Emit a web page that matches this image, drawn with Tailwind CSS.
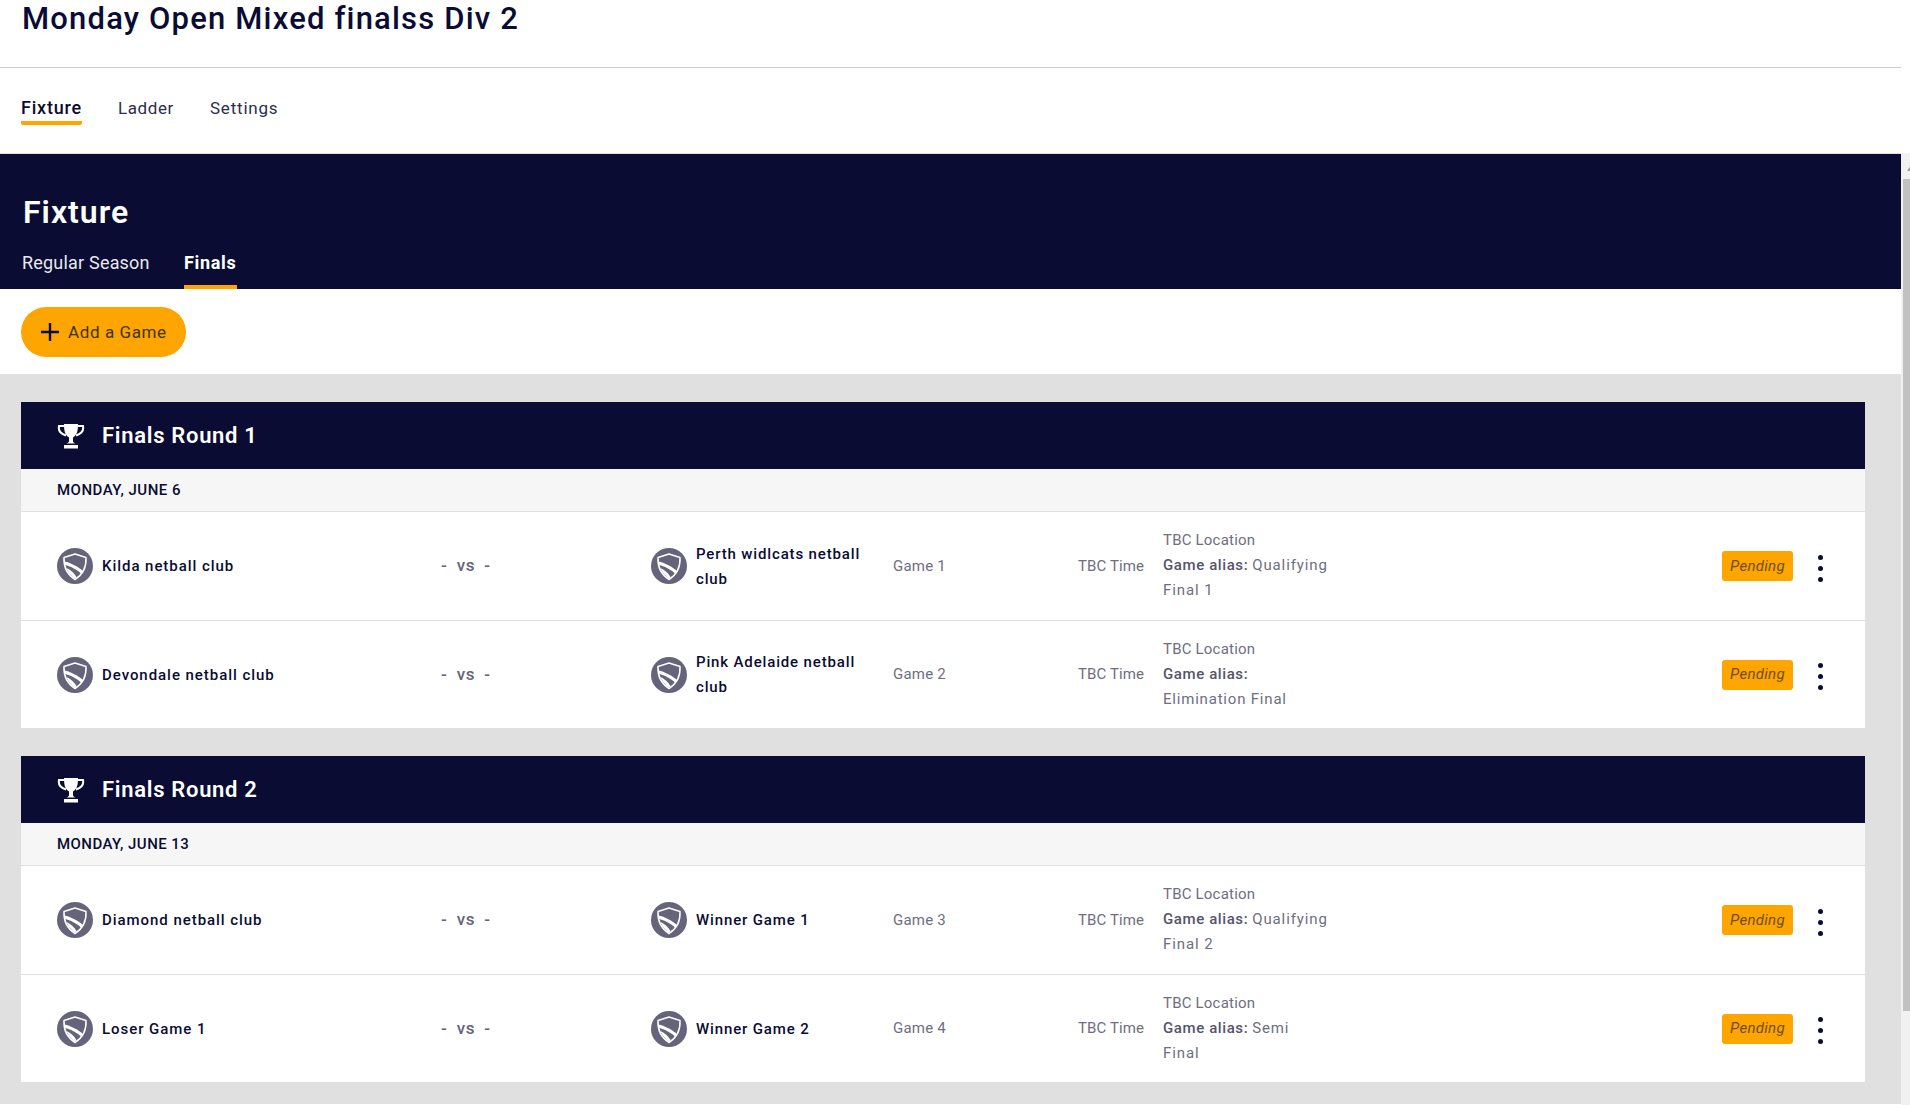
<!DOCTYPE html>
<html lang="en">
<head>
  <meta charset="UTF-8" />
  <title>Monday Open Mixed finalss Div 2</title>
  <script src="https://cdn.jsdelivr.net/npm/@tailwindcss/browser@4"></script>
</head>
<body class="bg-white h-[1105px] overflow-hidden font-['Roboto',sans-serif] text-[#0a0c33]">

  <svg class="hidden">
    <symbol id="shield" viewBox="0 0 36 36">
      <circle cx="18" cy="18" r="18" fill="#66647a" />
      <path d="M18 6 L29 9.5 C29.5 18 26.5 26 18 31.5 C9.5 26 6.5 18 7 9.5 Z" fill="none" stroke="#fff" stroke-width="1.5" stroke-linejoin="round" />
      <path d="M7.5 13.5 C13 14.5 22 19 26.5 23.5 L24.5 26 C20 21.5 13 18 8 17 Z" fill="#fff" />
      <path d="M9.5 20 C13 21.5 17 25 19.5 29 L18 30.5 C15 28.5 11 24.5 9.5 20 Z" fill="#fff" />
    </symbol>
    <symbol id="trophy" viewBox="0 0 28 26">
      <path d="M7 1 H21 C21 8 20 12 16 14.5 V18 C16 19.5 17.5 20.5 19 20.5 H9 C10.5 20.5 12 19.5 12 18 V14.5 C8 12 7 8 7 1 Z" fill="#fff" />
      <path d="M7 3 H2 C1 8 4 11 9 12.5 M21 3 H26 C27 8 24 11 19 12.5" fill="none" stroke="#fff" stroke-width="2" />
      <rect x="7" y="22" width="14" height="3.5" fill="#fff" />
    </symbol>
  </svg>

  <div class="w-[1901px]">
    <!-- Page title -->
    <header class="h-[68px] border-b border-[#cccccc] pl-[22px] pt-[1px]">
      <h1 class="text-[31px] leading-[36px] font-medium tracking-[1.18px]">Monday Open Mixed finalss Div 2</h1>
    </header>

    <!-- Top tabs -->
    <nav class="h-[86px] pl-[21px] pt-[30px] flex gap-[36px] text-[17px] border-b border-[#e0e0e0] text-[#2c2d4d]">
      <a class="w-[61px] h-[27px] border-b-4 border-[#ffa500] rounded-b-[2px] font-medium text-[#0a0c33] text-[18px] tracking-[0.8px] leading-[20px]">Fixture</a>
      <a class="leading-[20px] tracking-[0.6px]">Ladder</a>
      <a class="leading-[20px] tracking-[0.8px]">Settings</a>
    </nav>

    <!-- Section banner -->
    <section class="h-[135px] bg-[#0a0c33] text-white pl-[23px] flex flex-col">
      <h2 class="text-[32px] leading-[36px] font-semibold mt-[40px] tracking-[1px]">Fixture</h2>
      <div class="flex gap-[36px] mt-[23px] text-[18px] leading-[20px]">
        <a class="w-[126px] -ml-[1px] tracking-[0.2px] text-[#e9e9ee] whitespace-nowrap">Regular Season</a>
        <a class="h-[36px] w-[53px] border-b-4 border-[#ffa500] font-bold tracking-[0.65px]">Finals</a>
      </div>
    </section>

    <!-- Add game -->
    <div class="h-[85px] pl-[21px] pt-[18px]">
      <button class="w-[165px] h-[50px] rounded-full bg-[#ffa500] flex items-center pl-[20px] gap-[9px] text-[17px] text-[#3d3423] tracking-[0.6px]">
        <svg class="w-[18px] h-[18px]" viewBox="0 0 18 18"><path d="M9 0 V18 M0 9 H18" stroke="#0a0c33" stroke-width="2.4" /></svg>
        <span class="mt-[1px]">Add a Game</span>
      </button>
    </div>

    <!-- Rounds -->
    <main class="bg-[#e0e0e0] h-[730px] pt-[28px] px-[21px] w-full">

      <div class="w-[1844px] bg-white mb-[28px]">
        <div class="h-[67px] bg-[#0a0c33] text-white flex items-center pl-[36px] gap-[17px]">
          <svg class="w-[28px] h-[26px]"><use href="#trophy" /></svg>
          <h3 class="text-[22px] font-semibold tracking-[0.7px]">Finals Round 1</h3>
        </div>
        <div class="h-[43px] pt-[1px] bg-[#f6f6f6] border-b border-[#e0e0e0] flex items-center pl-[36px] text-[15px] font-medium tracking-[0.5px]">MONDAY, JUNE 6</div>

        <div class="h-[109px] border-b border-[#e0e0e0] flex items-center pl-[36px] text-[15px]">
          <div class="w-[385px] flex items-center gap-[9px] font-medium tracking-[0.95px]">
            <svg class="w-[36px] h-[36px] shrink-0"><use href="#shield" /></svg>
            <span class="mt-[1px]">Kilda netball club</span>
          </div>
          <div class="w-[209px] -ml-[1px] mr-[1px] text-[#66647a] font-medium tracking-[0.5px] text-[17px]">-&nbsp; vs &nbsp;-</div>
          <div class="w-[242px] flex items-center gap-[9px] font-medium tracking-[0.85px] leading-[25px]">
            <svg class="w-[36px] h-[36px] shrink-0"><use href="#shield" /></svg>
            <span class="w-[195px] mt-[1px]">Perth widlcats netball club</span>
          </div>
          <div class="w-[185px] text-[#6f6e7f] tracking-[0.2px]">Game 1</div>
          <div class="w-[85px] text-[#6f6e7f] tracking-[0.1px]">TBC Time</div>
          <div class="w-[175px] -mt-[1px] text-[#6f6e7f] leading-[25px] tracking-[0.2px]">TBC Location<br /><b class="font-medium text-[#55546a] tracking-[0.6px]">Game alias:</b> <span class="tracking-[0.9px]">Qualifying<br />Final 1</span></div>
          <div class="ml-auto flex items-center">
            <span class="w-[71px] h-[30px] rounded-[3px] bg-[#ffa500] text-[#6f4e14] italic text-[15px] flex items-center justify-center tracking-[0.3px]">Pending</span>
            <svg class="w-[5px] h-[27px] mt-[4px] ml-[25px] mr-[42px]" viewBox="0 0 5 27" fill="#0a0c33"><circle cx="2.5" cy="2.5" r="2.5" /><circle cx="2.5" cy="13.5" r="2.5" /><circle cx="2.5" cy="24.5" r="2.5" /></svg>
          </div>
        </div>

        <div class="h-[107px] flex items-center pl-[36px] text-[15px]">
          <div class="w-[385px] flex items-center gap-[9px] font-medium tracking-[0.95px]">
            <svg class="w-[36px] h-[36px] shrink-0"><use href="#shield" /></svg>
            <span class="mt-[1px]">Devondale netball club</span>
          </div>
          <div class="w-[209px] -ml-[1px] mr-[1px] text-[#66647a] font-medium tracking-[0.5px] text-[17px]">-&nbsp; vs &nbsp;-</div>
          <div class="w-[242px] flex items-center gap-[9px] font-medium tracking-[0.85px] leading-[25px]">
            <svg class="w-[36px] h-[36px] shrink-0"><use href="#shield" /></svg>
            <span class="w-[195px] mt-[1px]">Pink Adelaide netball club</span>
          </div>
          <div class="w-[185px] text-[#6f6e7f] tracking-[0.2px]">Game 2</div>
          <div class="w-[85px] text-[#6f6e7f] tracking-[0.1px]">TBC Time</div>
          <div class="w-[175px] -mt-[1px] text-[#6f6e7f] leading-[25px] tracking-[0.2px]">TBC Location<br /><b class="font-medium text-[#55546a] tracking-[0.6px]">Game alias:</b><br /><span class="tracking-[0.8px]">Elimination Final</span></div>
          <div class="ml-auto flex items-center">
            <span class="w-[71px] h-[30px] rounded-[3px] bg-[#ffa500] text-[#6f4e14] italic text-[15px] flex items-center justify-center tracking-[0.3px]">Pending</span>
            <svg class="w-[5px] h-[27px] mt-[4px] ml-[25px] mr-[42px]" viewBox="0 0 5 27" fill="#0a0c33"><circle cx="2.5" cy="2.5" r="2.5" /><circle cx="2.5" cy="13.5" r="2.5" /><circle cx="2.5" cy="24.5" r="2.5" /></svg>
          </div>
        </div>
      </div>

      <div class="w-[1844px] bg-white">
        <div class="h-[67px] bg-[#0a0c33] text-white flex items-center pl-[36px] gap-[17px]">
          <svg class="w-[28px] h-[26px]"><use href="#trophy" /></svg>
          <h3 class="text-[22px] font-semibold tracking-[0.7px]">Finals Round 2</h3>
        </div>
        <div class="h-[43px] pt-[1px] bg-[#f6f6f6] border-b border-[#e0e0e0] flex items-center pl-[36px] text-[15px] font-medium tracking-[0.45px]">MONDAY, JUNE 13</div>

        <div class="h-[109px] border-b border-[#e0e0e0] flex items-center pl-[36px] text-[15px]">
          <div class="w-[385px] flex items-center gap-[9px] font-medium tracking-[0.95px]">
            <svg class="w-[36px] h-[36px] shrink-0"><use href="#shield" /></svg>
            <span class="mt-[1px]">Diamond netball club</span>
          </div>
          <div class="w-[209px] -ml-[1px] mr-[1px] text-[#66647a] font-medium tracking-[0.5px] text-[17px]">-&nbsp; vs &nbsp;-</div>
          <div class="w-[242px] flex items-center gap-[9px] font-medium tracking-[0.85px] leading-[25px]">
            <svg class="w-[36px] h-[36px] shrink-0"><use href="#shield" /></svg>
            <span class="w-[195px] mt-[1px]">Winner Game 1</span>
          </div>
          <div class="w-[185px] text-[#6f6e7f] tracking-[0.2px]">Game 3</div>
          <div class="w-[85px] text-[#6f6e7f] tracking-[0.1px]">TBC Time</div>
          <div class="w-[175px] -mt-[1px] text-[#6f6e7f] leading-[25px] tracking-[0.2px]">TBC Location<br /><b class="font-medium text-[#55546a] tracking-[0.6px]">Game alias:</b> <span class="tracking-[0.9px]">Qualifying<br />Final 2</span></div>
          <div class="ml-auto flex items-center">
            <span class="w-[71px] h-[30px] rounded-[3px] bg-[#ffa500] text-[#6f4e14] italic text-[15px] flex items-center justify-center tracking-[0.3px]">Pending</span>
            <svg class="w-[5px] h-[27px] mt-[4px] ml-[25px] mr-[42px]" viewBox="0 0 5 27" fill="#0a0c33"><circle cx="2.5" cy="2.5" r="2.5" /><circle cx="2.5" cy="13.5" r="2.5" /><circle cx="2.5" cy="24.5" r="2.5" /></svg>
          </div>
        </div>

        <div class="h-[107px] flex items-center pl-[36px] text-[15px]">
          <div class="w-[385px] flex items-center gap-[9px] font-medium tracking-[0.95px]">
            <svg class="w-[36px] h-[36px] shrink-0"><use href="#shield" /></svg>
            <span class="mt-[1px]">Loser Game 1</span>
          </div>
          <div class="w-[209px] -ml-[1px] mr-[1px] text-[#66647a] font-medium tracking-[0.5px] text-[17px]">-&nbsp; vs &nbsp;-</div>
          <div class="w-[242px] flex items-center gap-[9px] font-medium tracking-[0.85px] leading-[25px]">
            <svg class="w-[36px] h-[36px] shrink-0"><use href="#shield" /></svg>
            <span class="w-[195px] mt-[1px]">Winner Game 2</span>
          </div>
          <div class="w-[185px] text-[#6f6e7f] tracking-[0.2px]">Game 4</div>
          <div class="w-[85px] text-[#6f6e7f] tracking-[0.1px]">TBC Time</div>
          <div class="w-[175px] -mt-[1px] text-[#6f6e7f] leading-[25px] tracking-[0.2px]">TBC Location<br /><b class="font-medium text-[#55546a] tracking-[0.6px]">Game alias:</b> <span class="tracking-[0.9px]">Semi<br />Final</span></div>
          <div class="ml-auto flex items-center">
            <span class="w-[71px] h-[30px] rounded-[3px] bg-[#ffa500] text-[#6f4e14] italic text-[15px] flex items-center justify-center tracking-[0.3px]">Pending</span>
            <svg class="w-[5px] h-[27px] mt-[4px] ml-[25px] mr-[42px]" viewBox="0 0 5 27" fill="#0a0c33"><circle cx="2.5" cy="2.5" r="2.5" /><circle cx="2.5" cy="13.5" r="2.5" /><circle cx="2.5" cy="24.5" r="2.5" /></svg>
          </div>
        </div>
      </div>
    </main>
  </div>

  <!-- Window scrollbar -->
  <div class="fixed top-[153px] right-0 bottom-0 w-[9px] bg-[#f1f1f1] overflow-hidden">
    <svg class="absolute top-[14px] left-[6px] w-[5px] h-[4px]" viewBox="0 0 5 4" fill="#a3a3a3"><path d="M2.5 0 L5 4 H0 Z" /></svg>
    <div class="mt-[26px] ml-[2px] h-[832px] bg-[#c1c1c1]"></div>
  </div>
</body>
</html>
